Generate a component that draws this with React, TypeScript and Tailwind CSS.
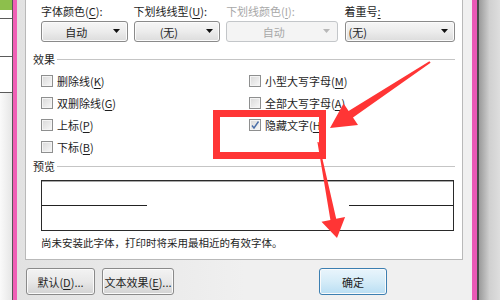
import type { ReactNode } from "react";

// Font dialog (Word, Win7 look) with red annotation overlay

const FONT = "font-['Noto_Sans_CJK_SC','Microsoft_YaHei',sans-serif]";

function Acc({ children }: { children: ReactNode }) {
  return <span className="underline decoration-1 underline-offset-[2px]">{children}</span>;
}

function Arrow({ disabled }: { disabled?: boolean }) {
  return (
    <svg width="8" height="5" viewBox="0 0 8 5" className="shrink-0">
      <polygon points="0,0 7,0 3.5,4" fill={disabled ? "#b8b8b8" : "#111"} />
    </svg>
  );
}

interface ComboProps {
  text: string;
  left?: boolean;
  disabled?: boolean;
}

function Combo({ text, left, disabled }: ComboProps) {
  const box = disabled
    ? "border-[#c3c6c9] bg-[#f4f4f4] text-[#a8a8a8]"
    : "border-[#8a8a8a] bg-gradient-to-b from-[#f6f6f6] via-[#ececec] to-[#dcdcdc] text-[#1e1e1e] shadow-[inset_0_0_0_1px_#fbfbfb]";
  return (
    <div className={`flex h-[21px] w-full items-center rounded-[3px] border ${box}`}>
      <span className={left ? "flex-1 pl-[3px] text-left" : "flex-1 text-center"}>{text}</span>
      <div className="flex w-[16px] justify-center pr-[3px]">
        <Arrow disabled={disabled} />
      </div>
    </div>
  );
}

function Check({ label, acc, checked }: { label: string; acc: string; checked?: boolean }) {
  return (
    <div className="flex h-[22px] items-center">
      <div className="flex h-[12px] w-[12px] items-center justify-center border border-[#8e8f8f] bg-gradient-to-br from-[#d8d8d8] to-[#f8f8f8] shadow-[inset_0_0_0_1px_#f4f4f4]">
        {checked && (
          <svg width="10" height="10" viewBox="0 0 10 10">
            <polyline points="2,5.5 4,8 8.5,1.5" fill="none" stroke="#4a6ea8" strokeWidth="1.4" />
          </svg>
        )}
      </div>
      <span className="ml-[4px] whitespace-nowrap text-[#1e1e1e]">
        {label}(<Acc>{acc}</Acc>)
      </span>
    </div>
  );
}

function Section({ title }: { title: string }) {
  return (
    <div className="flex h-[14px] items-center">
      <span className="text-[#1e1e1e]">{title}</span>
      <div className="ml-[2px] h-px flex-1 bg-[#c5c5c5]" />
    </div>
  );
}

function Button({ children, primary, className }: { children: ReactNode; primary?: boolean; className: string }) {
  const look = primary
    ? "border-[#3c7fb1] bg-gradient-to-b from-[#e9f5fc] via-[#d5ecf8] to-[#b9def3]"
    : "border-[#8a8a8a] bg-gradient-to-b from-[#f3f3f3] via-[#e8e8e8] to-[#d3d3d3]";
  return (
    <div
      className={`flex h-[27px] items-center justify-center whitespace-nowrap rounded-[3px] border text-[#1e1e1e] shadow-[inset_0_0_0_1px_#fafafa] ${look} ${className}`}
    >
      {children}
    </div>
  );
}

export default function App() {
  return (
    <div className={`relative flex h-[300px] w-[500px] overflow-hidden bg-[#f0f0f0] text-[11px] leading-[14px] ${FONT}`}>
      {/* spreadsheet sliver on the left */}
      <div className="flex w-[12px] flex-col bg-[#f7f7f7]">
        <div className="h-[10px] bg-[#8dbf4c]" />
        <div className="h-[9px] border-b border-[#5a5a5a] bg-white" />
        <div className="h-[38px] border-b border-[#5a5a5a] bg-white" />
        <div className="h-[36px] border-b border-[#5a5a5a] bg-white" />
        <div className="flex-1 bg-gradient-to-r from-[#fafafa] to-[#e6e6e6]" />
      </div>
      <div className="w-px bg-[#555]" />
      <div className="w-[4px] bg-[#f060b6]" />

      {/* dialog body */}
      <div className="flex w-[455px] flex-col bg-gradient-to-r from-[#e2e2e2] via-[#f0f0f0] to-[#f0f0f0] pl-[8px] pr-[9px]">
        <div className="flex h-[260px] flex-col border-x border-b border-[#b9b9b9] bg-white px-[7px]">
          {/* font colour / underline row */}
          <div className="mt-[4px] flex pl-[8px]">
            <div className="flex w-[87px] flex-col">
              <span className="h-[14px] text-[#1e1e1e]">
                字体颜色(<Acc>C</Acc>):
              </span>
              <div className="mt-[3px]">
                <Combo text="自动" />
              </div>
            </div>
            <div className="ml-[6px] flex w-[87px] flex-col">
              <span className="h-[14px] text-[#1e1e1e]">
                下划线线型(<Acc>U</Acc>):
              </span>
              <div className="mt-[3px]">
                <Combo text="(无)" />
              </div>
            </div>
            <div className="ml-[6px] flex w-[112px] flex-col">
              <span className="h-[14px] text-[#a8a8a8]">
                下划线颜色(<Acc>I</Acc>):
              </span>
              <div className="mt-[3px]">
                <Combo text="自动" disabled />
              </div>
            </div>
            <div className="ml-[7px] flex w-[111px] flex-col">
              <span className="h-[14px] text-[#1e1e1e]">
                着重号<Acc>:</Acc>
              </span>
              <div className="mt-[3px]">
                <Combo text="(无)" left />
              </div>
            </div>
          </div>

          <div className="mt-[10px]">
            <Section title="效果" />
          </div>
          <div className="mt-[4px] flex pl-[8px]">
            <div className="flex w-[208px] flex-col">
              <Check label="删除线" acc="K" />
              <Check label="双删除线" acc="G" />
              <Check label="上标" acc="P" />
              <Check label="下标" acc="B" />
            </div>
            <div className="flex flex-col">
              <Check label="小型大写字母" acc="M" />
              <Check label="全部大写字母" acc="A" />
              <Check label="隐藏文字" acc="H" checked />
            </div>
          </div>

          <div className="mt-px">
            <Section title="预览" />
          </div>
          <div className="ml-[8px] mr-px mt-[7px] flex h-[51px] flex-col border border-[#2a2a2a] shadow-[inset_0_1px_0_#a8a8a8]">
            <div className="h-[24px]" />
            <div className="flex justify-between">
              <div className="h-px w-[105px] bg-[#222]" />
              <div className="h-px w-[104px] bg-[#222]" />
            </div>
          </div>
          <div className="ml-[8px] mt-[5px] text-[10.5px] text-[#1e1e1e]">尚未安装此字体，打印时将采用最相近的有效字体。</div>
        </div>

        {/* button row */}
        <div className="mt-[8px] flex pl-px">
          <Button className="w-[69px]">
            默认(<Acc>D</Acc>)...
          </Button>
          <Button className="ml-[7px] w-[72px]">
            文本效果(<Acc>E</Acc>)...
          </Button>
          <Button primary className="ml-[145px] w-[68px]">
            确定
          </Button>
        </div>
      </div>

      {/* right window edge */}
      <div className="w-[5px] bg-[#ea5ab6]" />
      <div className="w-[2px] bg-[#4a4a4a]" />
      <div className="flex-1 bg-gradient-to-r from-[#9a9a9a] via-[#d0d0d0] to-[#dedede]" />

      {/* red annotation */}
      <svg className="pointer-events-none absolute inset-0" width="500" height="300" viewBox="0 0 500 300">
        <rect x="216.5" y="113.5" width="106" height="42" fill="none" stroke="#ff3535" strokeWidth="7" />
        <polygon
          points="429.4,61.2 348.6,110.9 343.6,103.4 330,128 358,125 353,117.5 430.6,62.8"
          fill="#ff3535"
        />
        <polygon
          points="317.4,142.1 330.4,220 321.5,221.7 337,238 345.1,217.1 336.2,218.8 318.6,141.9"
          fill="#ff3535"
        />
      </svg>
    </div>
  );
}
